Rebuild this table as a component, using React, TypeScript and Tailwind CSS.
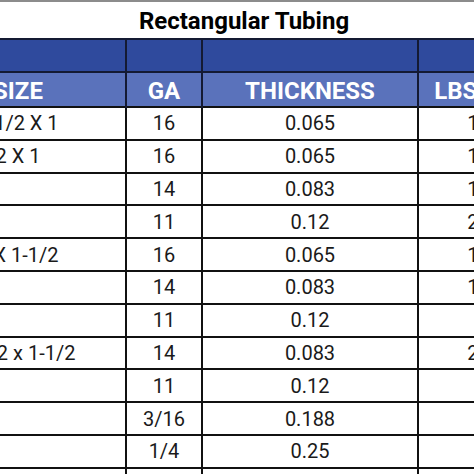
import React from 'react';

interface TubeRow {
  size: string;
  ga: string;
  thickness: string;
  lbs: string;
}

const rows: TubeRow[] = [
  { size: '1-1/2 X 1', ga: '16', thickness: '0.065', lbs: '1.1020' },
  { size: '2 X 1', ga: '16', thickness: '0.065', lbs: '1.3230' },
  { size: '', ga: '14', thickness: '0.083', lbs: '1.6570' },
  { size: '', ga: '11', thickness: '0.12', lbs: '2.2810' },
  { size: '2 X 1-1/2', ga: '16', thickness: '0.065', lbs: '1.5440' },
  { size: '', ga: '14', thickness: '0.083', lbs: '1.9390' },
  { size: '', ga: '11', thickness: '0.12', lbs: '2.69' },
  { size: '2-1/2 x 1-1/2', ga: '14', thickness: '0.083', lbs: '2.1330' },
  { size: '', ga: '11', thickness: '0.12', lbs: '3.02' },
  { size: '', ga: '3/16', thickness: '0.188', lbs: '4.42' },
  { size: '', ga: '1/4', thickness: '0.25', lbs: '5.61' },
  { size: '3 X 1', ga: '16', thickness: '0.065', lbs: '1.76' },
];

const cols = 'grid grid-cols-[216px_76px_216px_158px]';

const App = () => {
  return (
    <div className="h-[474px] w-[474px] overflow-hidden bg-white font-['Roboto','Liberation_Sans',sans-serif]">
      <div className="-ml-[89px] w-[666px]">
        {/* Title */}
        <div className="flex h-[38px] items-center justify-center border-t-2 border-[#8c8c8c] pt-[1px] text-[24px] font-bold text-black">
          Rectangular Tubing
        </div>

        {/* Header band */}
        <div className={`${cols} h-[35px] border-y-2 border-y-[#141a33] bg-[#2f4a9d]`}>
          <div className="border-r-2 border-[#141a33]" />
          <div className="border-r-2 border-[#141a33]" />
          <div className="border-r-2 border-[#141a33]" />
          <div />
        </div>

        {/* Column titles */}
        <div className={`${cols} h-[35px] border-b-2 border-[#111] bg-[#5a72bb] text-[24px] font-bold text-white`}>
          <div className="flex items-center justify-center border-r-2 border-[#141a33]">SIZE</div>
          <div className="flex items-center justify-center border-r-2 border-[#141a33]">GA</div>
          <div className="flex items-center justify-center border-r-2 border-[#141a33]">THICKNESS</div>
          <div className="flex items-center justify-center">LBS PER FT</div>
        </div>

        {/* Data rows */}
        {rows.map((row, i) => (
          <div
            key={i}
            className={`${cols} h-[32.8px] border-b-2 border-[#111] text-[20px] text-[#1a1a1a]`}
          >
            <div className="flex items-center justify-center border-r-2 border-[#111] whitespace-pre">{row.size}</div>
            <div className="flex items-center justify-center border-r-2 border-[#111]">{row.ga}</div>
            <div className="flex items-center justify-center border-r-2 border-[#111]">{row.thickness}</div>
            <div className="flex items-center justify-center">{row.lbs}</div>
          </div>
        ))}
      </div>
    </div>
  );
};

export default App;
